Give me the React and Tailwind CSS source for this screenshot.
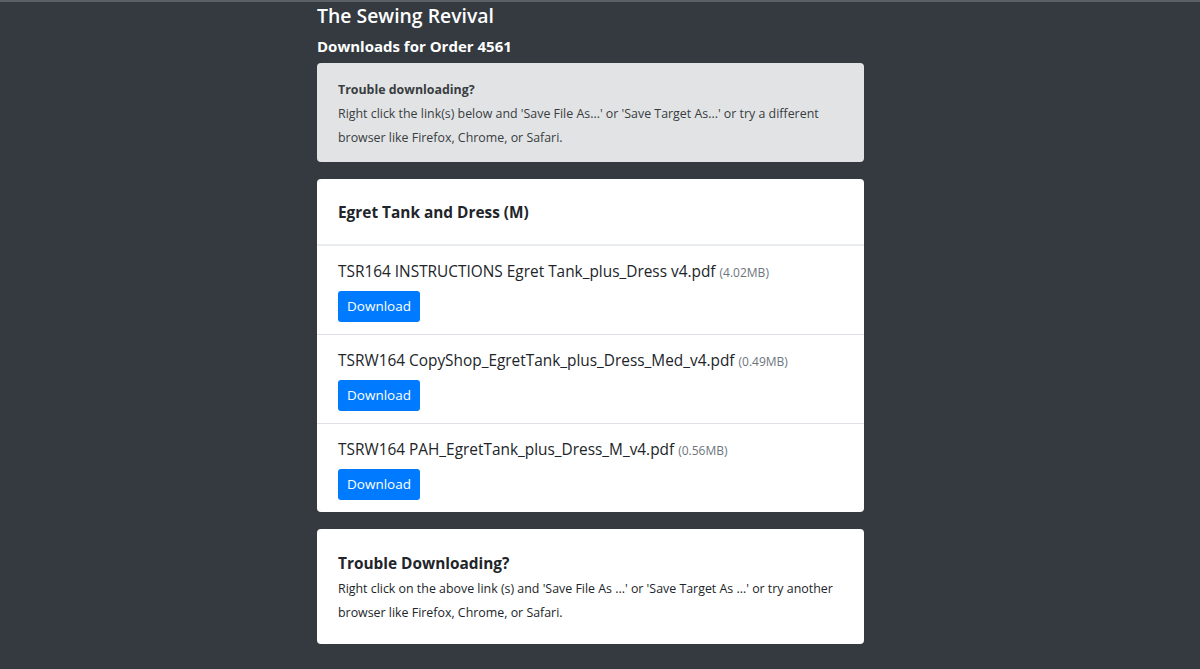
// Order downloads page
const FILES = [
  { name: 'TSR164 INSTRUCTIONS Egret Tank_plus_Dress v4.pdf', size: '4.02MB' },
  { name: 'TSRW164 CopyShop_EgretTank_plus_Dress_Med_v4.pdf', size: '0.49MB' },
  { name: 'TSRW164 PAH_EgretTank_plus_Dress_M_v4.pdf', size: '0.56MB' },
];

export default function App() {
  return (
    <div className="min-h-[669px] border-t-2 border-[#5b6066] bg-[#343a40] pl-[317px] text-[#212529]" style={{ fontFamily: '"Open Sans", "Noto Sans", sans-serif' }}>
      <div className="w-[547px] pb-6">
        <h1 className="text-[19.4px] font-semibold leading-[28px] text-white">The Sewing Revival</h1>
        <h2 className="mt-[2px] text-[15px] font-bold leading-[28px] text-white">Downloads for Order 4561</h2>

        <div className="mt-[3px] rounded-[4px] bg-[#e2e3e5] px-[21px] pb-[12px] pt-[15px] text-[#383d41]">
          <p className="text-[12.4px] font-bold leading-[24px]">Trouble downloading?</p>
          <p className="text-[12.4px] leading-[24px]">Right click the link(s) below and 'Save File As...' or 'Save Target As...' or try a different browser like Firefox, Chrome, or Safari.</p>
        </div>

        <div className="mt-[17px] overflow-hidden rounded-[4px] bg-white">
          <div className="border-b-2 border-[#e9ecef] px-[21px] pb-[20px] pt-[23px]">
            <h3 className="text-[15.4px] font-bold leading-[22px]">Egret Tank and Dress (M)</h3>
          </div>
          {FILES.map((file, i) => (
            <div key={file.name} className={i < FILES.length - 1 ? 'border-b border-[#dee2e6] px-[21px] pb-[12px] pt-[14px]' : 'px-[21px] pb-[12px] pt-[14px]'}>
              <p className="text-[15.4px] leading-[24px] text-[#212529]">
                {file.name} <span className="text-[12px] leading-none text-[#6c757d]">({file.size})</span>
              </p>
              <button type="button" className="mt-[7px] h-[31px] rounded-[3px] bg-[#007bff] px-[9px] text-[13.5px] text-white">
                Download
              </button>
            </div>
          ))}
        </div>

        <div className="mt-[17px] rounded-[4px] bg-white px-[21px] pb-[19px] pt-[23px]">
          <h3 className="mb-[1px] text-[15.4px] font-bold leading-[24px]">Trouble Downloading?</h3>
          <p className="text-[12.4px] leading-[24px] text-[#212529]">Right click on the above link (s) and 'Save File As ...' or 'Save Target As ...' or try another browser like Firefox, Chrome, or Safari.</p>
        </div>
      </div>
    </div>
  );
}
